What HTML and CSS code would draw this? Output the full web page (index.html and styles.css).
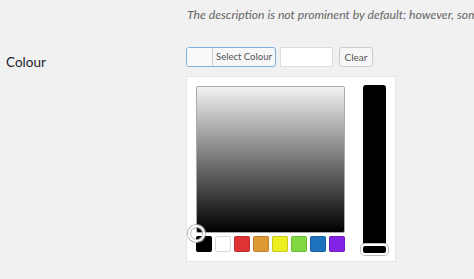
FILE: index.html
```html
<!DOCTYPE html>
<html lang="en">
<head>
    <meta charset="UTF-8">
    <title>Colour setting</title>
    <link rel="stylesheet" href="styles.css">
</head>
<body>
    <div class="form-table">
        <div class="row row-desc">
            <div class="label"></div>
            <div class="field">
                <p class="description">The description is not prominent by default; however, some plugins may change this.</p>
            </div>
        </div>
        <div class="row">
            <div class="label">Colour</div>
            <div class="field">
                <div class="picker-controls">
                    <button type="button" class="color-result">
                        <span class="color-chip"></span>
                        <span class="color-text">Select Colour</span>
                    </button>
                    <input type="text" class="color-input">
                    <button type="button" class="button">Clear</button>
                </div>
                <div class="iris">
                    <div class="iris-main">
                        <div class="iris-square">
                            <span class="iris-handle"></span>
                        </div>
                        <div class="iris-palette">
                            <span class="swatch" style="background:#000000"></span>
                            <span class="swatch" style="background:#ffffff"></span>
                            <span class="swatch" style="background:#dd3333"></span>
                            <span class="swatch" style="background:#dd9933"></span>
                            <span class="swatch" style="background:#eeee22"></span>
                            <span class="swatch" style="background:#81d742"></span>
                            <span class="swatch" style="background:#1e73be"></span>
                            <span class="swatch" style="background:#8224e3"></span>
                        </div>
                    </div>
                    <div class="iris-slider">
                        <span class="slider-handle"></span>
                    </div>
                </div>
            </div>
        </div>
    </div>
</body>
</html>
```
FILE: styles.css
```css
html, body { margin: 0; padding: 0; }
body {
    background: #f1f1f1;
    color: #23282d;
    font-family: Lato, "Noto Sans", sans-serif;
    overflow: hidden;
}
.form-table { padding: 0 0 0 6px; }
.row { display: flex; }
.label {
    width: 180px;
    flex: none;
    font-size: 13.5px;
    color: #1d2327;
    padding-top: 31px;
}
.row-desc .label { padding-top: 0; }
.field { flex: 1; min-width: 0; overflow: hidden; }
.description {
    margin: 6px 0 0 1px;
    font-size: 12.2px;
    line-height: 17px;
    font-style: italic;
    color: #666;
    white-space: nowrap;
}
.picker-controls {
    display: flex;
    align-items: center;
    margin-top: 24px;
    height: 20px;
}
.color-result {
    display: flex;
    width: 90px;
    height: 20px;
    padding: 0;
    border: 1px solid #7fb0dc;
    border-radius: 3px;
    background: #f7f7f7;
    overflow: hidden;
    cursor: pointer;
    font-family: inherit;
}
.color-chip {
    width: 25px;
    flex: none;
    background: #f9f9f9;
    border-right: 1px solid #ccc;
}
.color-text {
    flex: 1;
    font-size: 9.5px;
    line-height: 18px;
    color: #555;
    text-align: center;
    white-space: nowrap;
}
.color-input {
    width: 51px;
    height: 18px;
    margin: 0 0 0 4px;
    padding: 0;
    border: 1px solid #ddd;
    background: #fff;
}
.button {
    width: 34px;
    height: 20px;
    margin-left: 6px;
    padding: 0;
    border: 1px solid #ccc;
    border-radius: 3px;
    background: #f7f7f7;
    color: #555;
    font-family: inherit;
    font-size: 10px;
}
.iris {
    display: flex;
    justify-content: space-between;
    width: 190px;
    height: 166px;
    margin-top: 9px;
    padding: 9px;
    background: #fff;
    border: 1px solid #e5e5e5;
}
.iris-main { display: flex; flex-direction: column; }
.iris-square {
    position: relative;
    width: 147px;
    height: 146px;
    border: 1px solid #aaa;
    border-radius: 2px;
    background: linear-gradient(to bottom, #f2f2f2 0%, #777 50%, #000 100%);
}
.iris-handle {
    position: absolute;
    left: -9px;
    bottom: -10px;
    width: 13px;
    height: 13px;
    border: 2px solid #fff;
    border-radius: 50%;
    box-shadow: 0 0 0 1px #aaa, inset 0 0 0 1px #aaa;
}
.iris-palette {
    display: flex;
    gap: 3px;
    margin-top: 3px;
}
.swatch {
    width: 16px;
    height: 16px;
    border-radius: 2px;
    box-shadow: inset 0 0 0 1px rgba(0, 0, 0, 0.15);
}
.iris-slider {
    position: relative;
    width: 23px;
    height: 162px;
    margin-top: -1px;
    background: #000;
    border-radius: 3px;
}
.slider-handle {
    position: absolute;
    left: -2px;
    bottom: -8px;
    width: 23px;
    height: 7px;
    border: 2px solid #fff;
    border-radius: 4px;
    background: #000;
    box-shadow: 0 0 0 1px #bbb;
}
```
